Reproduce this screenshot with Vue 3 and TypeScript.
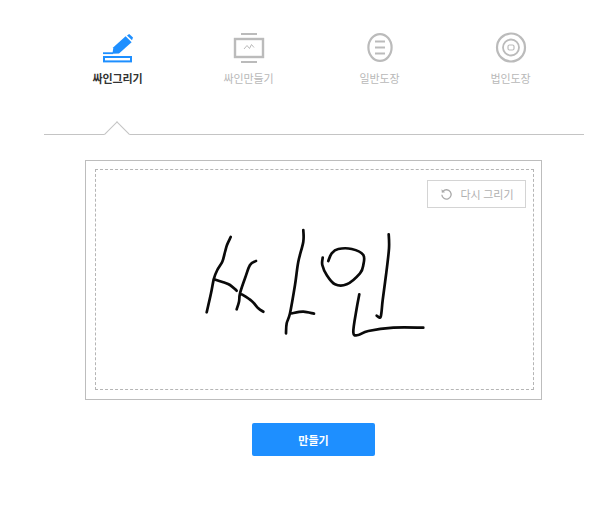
<script setup lang="ts">
const raw: number[][][] = [
  [[230.7,237],[227,245],[225,252],[222.3,261.7],[217.3,270],[214,278.3],[211,293.3],[206.7,312.3]],
  [[214,279.3],[223.3,282.3],[230,285],[236.7,290.7]],
  [[256,261],[250,265],[245,278.3],[240,293.3],[239,301.7],[236.7,309.3]],
  [[241.7,294.3],[251.7,301],[258.3,308.3],[263.3,311.7]],
  [[303.3,230],[303.3,241.7],[298.3,261.7],[295,285],[290,313.3],[286.7,323.3],[286,333.3]],
  [[291.7,313.3],[303.3,311.7],[314,313.7]],
  [[328.3,261],[331.7,253.3],[338.3,249],[351.7,249],[363.3,255],[363.3,265],[360,273.3],[346.7,284.3],[335,284.3],[326.7,275],[322.3,265],[322.7,257.7]],
  [[388.7,234.3],[389,248.3],[386,275],[382.7,300],[380.7,316.7],[376.7,315.7]],
  [[359.3,294.3],[356.7,308.3],[353.3,332.3],[358.3,335],[368.3,331],[393.3,327.7],[423.3,327.7]],
]

// Catmull-Rom smoothing so the handwriting reads as a pen trace
function smooth(p: number[][]): string {
  let d = `M${p[0][0]} ${p[0][1]}`
  for (let i = 0; i < p.length - 1; i++) {
    const a = p[Math.max(i - 1, 0)]
    const b = p[i]
    const c = p[i + 1]
    const e = p[Math.min(i + 2, p.length - 1)]
    const c1x = b[0] + (c[0] - a[0]) / 6
    const c1y = b[1] + (c[1] - a[1]) / 6
    const c2x = c[0] - (e[0] - b[0]) / 6
    const c2y = c[1] - (e[1] - b[1]) / 6
    d += `C${c1x.toFixed(1)} ${c1y.toFixed(1)} ${c2x.toFixed(1)} ${c2y.toFixed(1)} ${c[0]} ${c[1]}`
  }
  return d
}
const strokes = raw.map(smooth)
</script>

<template>
  <main class="page">
    <nav class="tabs">
      <div class="tab active">
        <svg class="icon" width="32" height="32" viewBox="0 0 32 32">
          <rect x="2" y="25" width="27" height="4.4" fill="#fff" stroke="#1e8fff" stroke-width="2" />
          <path d="M1 21.2H11" stroke="#1e8fff" stroke-width="1.8" fill="none" />
          <path d="M10.4 21.8l1-6.6L23.6 4.2l6 6L17 21.6z" fill="#1e8fff" />
          <path d="M25 3.4l2.2-1.4 3.8 3.4-1 2.8z" fill="#1e8fff" />
        </svg>
        <span>싸인그리기</span>
      </div>
      <div class="tab">
        <svg class="icon" width="32" height="32" viewBox="0 0 32 32">
          <path d="M8 2h16" stroke="#bbb" stroke-width="2" />
          <rect x="2" y="7" width="28" height="18" fill="#fff" stroke="#bbb" stroke-width="2.4" />
          <path d="M11 17l3-3.5 2.5 3 2-4 2.5 3" fill="none" stroke="#bbb" stroke-width="1" />
          <path d="M8 30h16" stroke="#bbb" stroke-width="2" />
        </svg>
        <span>싸인만들기</span>
      </div>
      <div class="tab">
        <svg class="icon" width="32" height="32" viewBox="0 0 32 32">
          <ellipse cx="16" cy="15.5" rx="11.6" ry="13.4" fill="none" stroke="#bbb" stroke-width="2.2" />
          <path d="M11 9.5h10M11 15.5h10M11 21.5h10" stroke="#bbb" stroke-width="2" />
        </svg>
        <span>일반도장</span>
      </div>
      <div class="tab">
        <svg class="icon" width="32" height="32" viewBox="0 0 32 32">
          <circle cx="16" cy="15.5" r="14" fill="none" stroke="#bbb" stroke-width="2.2" />
          <circle cx="16" cy="15.5" r="8" fill="none" stroke="#bbb" stroke-width="1.8" />
          <rect x="13" y="13" width="6" height="5" rx="1.5" fill="none" stroke="#bbb" stroke-width="1.2" />
        </svg>
        <span>법인도장</span>
      </div>
    </nav>

    <div class="divider"><i class="notch"></i></div>

    <section class="board">
      <div class="canvas">
        <svg class="signature" width="609" height="511" viewBox="0 0 609 511">
          <path v-for="(s, i) in strokes" :key="i" :d="s" />
        </svg>
        <button class="redraw" type="button">
          <svg width="13" height="13" viewBox="0 0 14 14">
            <path d="M3.2 3.6A5 5 0 1 1 2 7.2" fill="none" stroke="#aaa" stroke-width="1.4" />
            <path d="M1.6 1.4l.4 3.6 3.5-.5z" fill="#aaa" />
          </svg>
          <span>다시 그리기</span>
        </button>
      </div>
    </section>

    <div class="actions">
      <button class="make" type="button">만들기</button>
    </div>
  </main>
</template>

<style scoped>
.page {
  width: 609px;
  height: 511px;
  box-sizing: border-box;
  padding-top: 32px;
  background: #fff;
  font-family: "Noto Sans CJK KR", "Noto Sans", sans-serif;
  overflow: hidden;
}
.tabs {
  display: grid;
  grid-template-columns: repeat(4, 131px);
  padding-left: 52px;
}
.tab {
  display: flex;
  flex-direction: column;
  align-items: center;
  color: #b8b8b8;
  font-size: 11px;
  letter-spacing: -0.1px;
  line-height: 16px;
}
.tab.active {
  color: #333;
  font-weight: 700;
}
.icon {
  display: block;
  margin-bottom: 6px;
}
.divider {
  position: relative;
  height: 1px;
  margin: 48px 25px 0 44px;
  background: #c4c4c4;
}
.notch {
  position: absolute;
  left: 64px;
  top: -9px;
  width: 18px;
  height: 18px;
  box-sizing: border-box;
  background: #fff;
  border-top: 1px solid #c4c4c4;
  border-left: 1px solid #c4c4c4;
  transform: rotate(45deg);
}
.board {
  width: 457px;
  height: 240px;
  box-sizing: border-box;
  margin: 25px 0 0 85px;
  padding: 8px 7px 9px 9px;
  border: 1px solid #bdbdbd;
}
.canvas {
  position: relative;
  height: 100%;
  box-sizing: border-box;
  border: 1px dashed #b5b5b5;
}
.signature {
  position: absolute;
  left: -96px;
  top: -170px;
  pointer-events: none;
}
.signature path {
  fill: none;
  stroke: #0a0a0a;
  stroke-width: 2.7;
  stroke-linecap: round;
  stroke-linejoin: round;
}
.redraw {
  position: absolute;
  top: 10px;
  right: 7px;
  width: 99px;
  height: 28px;
  display: flex;
  align-items: center;
  justify-content: center;
  gap: 7px;
  padding: 0 0 0 1px;
  background: #fff;
  border: 1px solid #d4d4d4;
  color: #b0b0b0;
  font-family: inherit;
  font-size: 11px;
  font-weight: 400;
}
.actions {
  display: flex;
  justify-content: flex-start;
  margin-top: 23px;
  padding-left: 252px;
}
.make {
  width: 123px;
  height: 33px;
  padding: 0;
  background: #1e8fff;
  border: 0;
  border-radius: 2px;
  color: #fff;
  font-family: inherit;
  font-size: 11px;
  font-weight: 700;
}
</style>
